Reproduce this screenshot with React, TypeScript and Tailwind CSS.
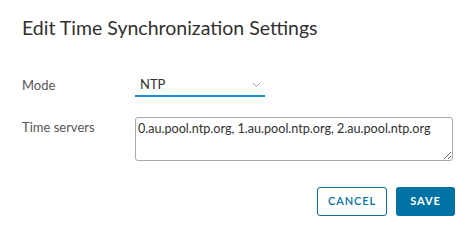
export default function App() {
  return (
    <div className="w-[474px] h-[236px] bg-white overflow-hidden" style={{ fontFamily: "Lato, 'Open Sans', sans-serif" }}>
      <div className="pl-[22px] pr-[19px] pt-[17px]">
        <h1 className="text-[19.5px] leading-[22px] text-[#313131] font-normal">Edit Time Synchronization Settings</h1>
        <div className="mt-[36px] flex items-center">
          <label className="w-[113px] text-[13px] text-[#565656]">Mode</label>
          <div className="relative w-[130px] h-[22px] border-b-2 border-[#1a8ccf] flex items-center pl-[5px]">
            <span className="text-[13px] text-[#313131]">NTP</span>
            <svg className="absolute right-[4px] top-[7px]" width="9" height="6" viewBox="0 0 9 6">
              <path d="M1 1 L4.5 4.5 L8 1" fill="none" stroke="#a0a0a0" strokeWidth="1" />
            </svg>
          </div>
        </div>
        <div className="mt-[20px] flex items-start">
          <label className="w-[113px] pt-[1px] text-[13px] text-[#565656]">Time servers</label>
          <textarea
            className="w-[318px] h-[44px] border border-[#a8a8a8] rounded-[3px] px-[2px] pt-[3px] text-[12.6px] text-[#313131] leading-[16px] outline-none"
            defaultValue="0.au.pool.ntp.org, 1.au.pool.ntp.org, 2.au.pool.ntp.org"
          />
        </div>
        <div className="mt-[26px] flex justify-end gap-[9px]">
          <button className="w-[70px] h-[29px] border border-[#0072a3] rounded-[3px] text-[#0072a3] text-[11px] font-semibold tracking-[0.08em]">CANCEL</button>
          <button className="w-[59px] h-[29px] bg-[#0072a3] rounded-[3px] text-white text-[11px] font-bold tracking-[0.08em]">SAVE</button>
        </div>
      </div>
    </div>
  );
}
